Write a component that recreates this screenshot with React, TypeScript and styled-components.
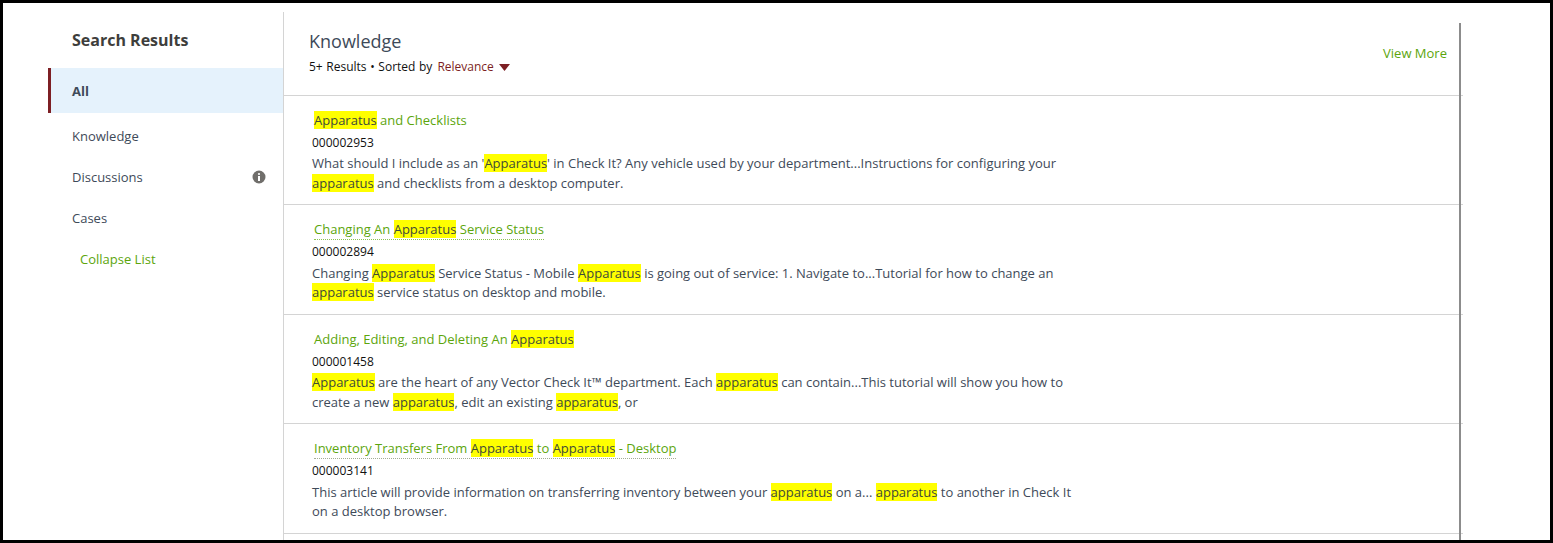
import { Fragment } from "react"
import styled, { createGlobalStyle } from "styled-components"

const GlobalStyle = createGlobalStyle`
    html, body {
        margin: 0;
        padding: 0;
        background: #fff;
    }
    body {
        font-family: "Open Sans", "Liberation Sans", sans-serif;
        font-size: 13px;
        color: #16325c;
    }
`

const Frame = styled.div`
    position: relative;
    box-sizing: border-box;
    width: 1553px;
    height: 543px;
    border: 3px solid #000;
    overflow: hidden;
    display: flex;
    padding: 9px 0 0 45px;
    background: #fff;
`

const Sidebar = styled.aside`
    width: 235px;
    flex: none;
`

const SidebarTitle = styled.h2`
    margin: 0;
    padding: 17px 0 0 24px;
    height: 56px;
    box-sizing: border-box;
    font-size: 16px;
    font-weight: 700;
    line-height: 22px;
    color: #3e3e3c;
`

const NavList = styled.ul`
    margin: 0;
    padding: 0;
    list-style: none;
`

const NavItem = styled.li<{ $active?: boolean }>`
    display: flex;
    align-items: center;
    justify-content: space-between;
    box-sizing: border-box;
    height: ${props => props.$active ? "45px" : "41px"};
    padding: 0 17px 0 ${props => props.$active ? "21px" : "24px"};
    margin-bottom: ${props => props.$active ? "2px" : "0"};
    background: ${props => props.$active ? "#e5f2fc" : "transparent"};
    border-left: ${props => props.$active ? "3px solid #7d1f24" : "none"};
    font-weight: ${props => props.$active ? 700 : 400};
    color: #3e4a59;
`

const CollapseLink = styled.a`
    display: block;
    padding: 12px 0 0 32px;
    line-height: 18px;
    color: #5ca50c;
`

const Results = styled.main`
    width: 1179px;
    flex: none;
    border-left: 1px solid #d4d4d4;
`

const ResultsHeader = styled.header`
    display: flex;
    justify-content: space-between;
    box-sizing: border-box;
    height: 83.5px;
    padding: 16px 16px 0 25px;
    border-bottom: 1px solid #d4d4d4;
`

const Heading = styled.h1`
    margin: 0;
    font-size: 18px;
    font-weight: 400;
    line-height: 26px;
    color: #3e4a59;
`

const SortLine = styled.div`
    display: flex;
    align-items: center;
    margin-top: 4px;
    font-size: 12px;
    line-height: 18px;
    word-spacing: 0.5px;
    color: #111;
`

const SortValue = styled.span`
    margin-left: 5px;
    color: #7d1f24;
`

const SortCaret = styled.svg`
    margin-left: 5px;
    width: 11px;
    height: 7px;
    fill: #7d1f24;
`

const ViewMore = styled.a`
    margin-top: 15px;
    line-height: 20px;
    color: #5ca50c;
`

const ResultRow = styled.article`
    box-sizing: border-box;
    height: 109.5px;
    padding: 15px 16px 0 28px;
    border-bottom: 1px solid #d4d4d4;
`

const Title = styled.a<{ $underlineColor?: string }>`
    display: inline-block;
    margin-left: 2px;
    line-height: 19px;
    color: #5ca50c;
    border-bottom: 1px dotted ${props => props.$underlineColor || "transparent"};
`

const ArticleNumber = styled.div`
    margin-top: 2px;
    font-size: 12px;
    line-height: 20px;
    color: #111;
`

const Snippet = styled.p`
    margin: 1.5px 0 0;
    width: 765px;
    line-height: 19.5px;
    color: #3e4a59;
`

const Hit = styled.mark`
    background: #ffff00;
    color: #3e4a39;
`

const ScrollEdge = styled.div`
    position: absolute;
    left: 1456px;
    top: 20px;
    bottom: 0;
    width: 2px;
    background: #8c8c8c;
`

type Result = {
    title: string
    number: string
    snippet: string
    underlineColor?: string
}

const results: Result[] = [
    {
        title: "[Apparatus] and Checklists",
        number: "000002953",
        snippet: "What should I include as an '[Apparatus]' in Check It? Any vehicle used by your department...Instructions for configuring your [apparatus] and checklists from a desktop computer.",
    },
    {
        title: "Changing An [Apparatus] Service Status",
        number: "000002894",
        snippet: "Changing [Apparatus] Service Status - Mobile [Apparatus] is going out of service: 1. Navigate to...Tutorial for how to change an [apparatus] service status on desktop and mobile.",
        underlineColor: "#8cc152",
    },
    {
        title: "Adding, Editing, and Deleting An [Apparatus]",
        number: "000001458",
        snippet: "[Apparatus] are the heart of any Vector Check It™ department. Each [apparatus] can contain...This tutorial will show you how to create a new [apparatus], edit an existing [apparatus], or",
    },
    {
        title: "Inventory Transfers From [Apparatus] to [Apparatus] - Desktop",
        number: "000003141",
        snippet: "This article will provide information on transferring inventory between your [apparatus] on a... [apparatus] to another in Check It on a desktop browser.",
        underlineColor: "#a3ad94",
    },
]

// text in [brackets] is the matched search term
const Highlighted = ({ text }: { text: string }) => (
    <>
        {text.split(/(\[[^\]]+\])/).map((part, i) => (
            <Fragment key={i}>
                {part.startsWith("[") ? <Hit>{part.slice(1, -1)}</Hit> : part}
            </Fragment>
        ))}
    </>
)

const InfoIcon = () => (
    <svg width="14" height="14" viewBox="0 0 14 14">
        <circle cx="7" cy="7" r="6.5" fill="#706e6b" />
        <circle cx="7" cy="4" r="1.1" fill="#fff" />
        <rect x="6" y="6" width="2" height="5" fill="#fff" />
    </svg>
)

export default function App() {
    return (
        <Frame>
            <GlobalStyle />
            <Sidebar>
                <SidebarTitle>Search Results</SidebarTitle>
                <NavList>
                    <NavItem $active>All</NavItem>
                    <NavItem>Knowledge</NavItem>
                    <NavItem>Discussions <InfoIcon /></NavItem>
                    <NavItem>Cases</NavItem>
                </NavList>
                <CollapseLink>Collapse List</CollapseLink>
            </Sidebar>
            <Results>
                <ResultsHeader>
                    <div>
                        <Heading>Knowledge</Heading>
                        <SortLine>
                            5+ Results • Sorted by
                            <SortValue>Relevance</SortValue>
                            <SortCaret viewBox="0 0 11 7"><path d="M0 0h11L5.5 7z" /></SortCaret>
                        </SortLine>
                    </div>
                    <ViewMore>View More</ViewMore>
                </ResultsHeader>
                {results.map(result => (
                    <ResultRow key={result.number}>
                        <Title $underlineColor={result.underlineColor}><Highlighted text={result.title} /></Title>
                        <ArticleNumber>{result.number}</ArticleNumber>
                        <Snippet><Highlighted text={result.snippet} /></Snippet>
                    </ResultRow>
                ))}
            </Results>
            <ScrollEdge />
        </Frame>
    )
}
